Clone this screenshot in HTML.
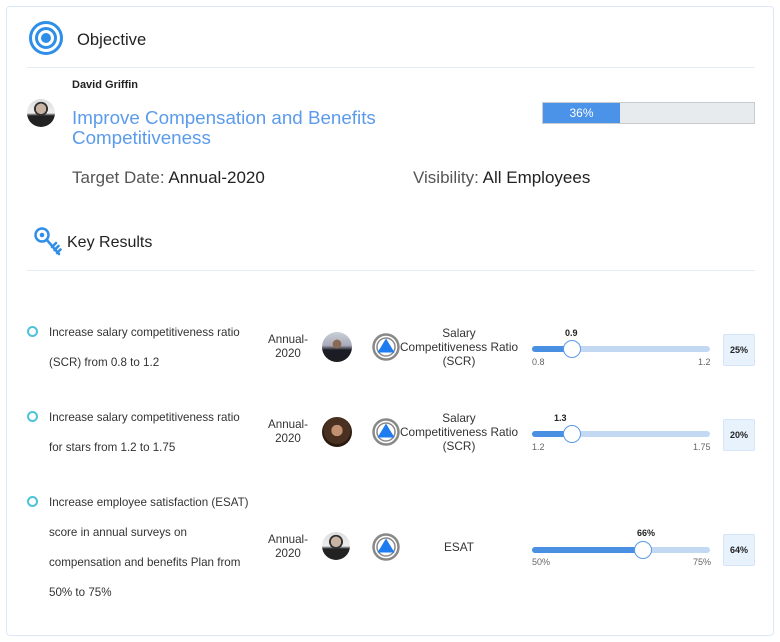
<!DOCTYPE html>
<html><head><meta charset="utf-8"><style>
*{margin:0;padding:0;box-sizing:border-box}
body{width:780px;height:642px;background:#fff;font-family:"Liberation Sans",sans-serif;color:#222;position:relative;overflow:hidden}
.a{position:absolute;white-space:nowrap}
.card{position:absolute;left:6px;top:6px;width:768px;height:630px;border:1px solid #dbe8f5;border-radius:4px}
.hr{position:absolute;left:27px;width:728px;height:1px;background:#e3edf7}
.krt{font-size:11.6px;color:#333;line-height:30px;left:49px}
.ann{font-size:11.6px;color:#333;text-align:center;width:50px;line-height:14px}
.met{font-size:11.8px;color:#333;text-align:center;width:130px;line-height:14px}
.track{position:absolute;left:532px;width:178px;height:6px;border-radius:3px;background:#c3d9f3}
.fill{position:absolute;left:0;top:0;height:6px;border-radius:3px;background:#4a90e2}
.thumb{position:absolute;width:18px;height:18px;border-radius:50%;background:#fff;border:1.5px solid #5b9be8}
.sm{font-size:9px;color:#666}
.val{font-size:9px;font-weight:bold;color:#222}
.box{position:absolute;left:723px;width:32px;height:32px;background:#e8f2fd;border:1px solid #d5e5f7;border-radius:2px;font-size:9px;font-weight:bold;text-align:center;line-height:30px}
.av{position:absolute;width:30px;height:30px;border-radius:50%}
.dot{position:absolute;left:27px;width:11px;height:11px;border:2px solid #4cc3d9;border-radius:50%}
</style></head><body>
<div class="card"></div>
<svg class="a" style="left:28px;top:20px" width="36" height="36"><circle cx="18" cy="18" r="15.5" fill="none" stroke="#2f8fe8" stroke-width="3"/><circle cx="18" cy="18" r="9.5" fill="none" stroke="#2f8fe8" stroke-width="3"/><circle cx="18" cy="18" r="5" fill="#2f8fe8"/></svg>
<div class="a" style="left:77px;top:30px;font-size:16.6px">Objective</div>
<div class="hr" style="top:67px"></div>
<div class="a" style="left:72px;top:79px;font-size:11px;font-weight:bold">David Griffin</div>
<div class="a" style="left:27px;top:99px;width:28px;height:28px;border-radius:50%;background:radial-gradient(circle at 50% 35%,#c9b3a3 0 22%,#333 23% 30%,transparent 31%),linear-gradient(#ddd,#eee 50%,#222 60%,#222);"></div>
<div class="a" style="left:72px;top:108px;font-size:18.8px;color:#5b9bec;line-height:20px;white-space:normal;width:360px">Improve Compensation and Benefits Competitiveness</div>
<div class="a" style="left:542px;top:102px;width:213px;height:22px;background:#e8ebee;border:1px solid #c8cbce"><div style="position:absolute;left:0;top:0;width:77px;height:20px;background:#4a93e8;color:#fff;font-size:12px;text-align:center;line-height:20px">36%</div></div>
<div class="a" style="left:72px;top:168px;font-size:17px;color:#555">Target Date: <span style="color:#222">Annual-2020</span></div>
<div class="a" style="left:413px;top:168px;font-size:17px;color:#555">Visibility: <span style="color:#222">All Employees</span></div>
<svg class="a" style="left:33px;top:226px" width="32" height="34"><circle cx="9" cy="9" r="6.5" fill="none" stroke="#2f8fe8" stroke-width="2.5"/><circle cx="9" cy="9" r="2.3" fill="#2f8fe8"/><path d="M13.5 13.5L26 28M19 21l4-4M21.5 24l4-4M24 27l3.5-3.5" stroke="#2f8fe8" stroke-width="2.5" stroke-linecap="round" fill="none"/></svg>
<div class="a" style="left:67px;top:234px;font-size:16px">Key Results</div>
<div class="hr" style="top:270px"></div>

<!-- row1 -->
<div class="dot" style="top:326px"></div>
<div class="a krt" style="top:318px">Increase salary competitiveness ratio<br>(SCR) from 0.8 to 1.2</div>
<div class="a ann" style="left:263px;top:333px">Annual-<br>2020</div>
<div class="av" style="left:322px;top:332px;background:radial-gradient(circle at 50% 40%,#8a6a55 0 18%,transparent 19%),linear-gradient(#c8d0d6,#aab 45%,#1c1c24 60%)"></div>
<svg class="a" style="left:372px;top:333px" width="28" height="28"><circle cx="14" cy="14" r="12.5" fill="#fff" stroke="#888" stroke-width="2.5"/><circle cx="14" cy="14" r="9" fill="#fff" stroke="#888" stroke-width="1.5"/><path d="M14 5.5L22.5 19.5H5.5Z" fill="#1f7cf0"/></svg>
<div class="a met" style="left:394px;top:326px">Salary<br>Competitiveness Ratio<br>(SCR)</div>
<div class="a val" style="left:565px;top:328px">0.9</div>
<div class="track" style="top:346px"><div class="fill" style="width:40px"></div></div>
<div class="thumb" style="left:563px;top:340px"></div>
<div class="a sm" style="left:532px;top:357px">0.8</div>
<div class="a sm" style="left:698px;top:357px">1.2</div>
<div class="box" style="top:334px">25%</div>

<!-- row2 -->
<div class="dot" style="top:411px"></div>
<div class="a krt" style="top:403px">Increase salary competitiveness ratio<br>for stars from 1.2 to 1.75</div>
<div class="a ann" style="left:263px;top:418px">Annual-<br>2020</div>
<div class="av" style="left:322px;top:417px;background:radial-gradient(circle at 50% 45%,#c09070 0 25%,#4a3020 26% 60%,#2a1a10 61%)"></div>
<svg class="a" style="left:372px;top:418px" width="28" height="28"><circle cx="14" cy="14" r="12.5" fill="#fff" stroke="#888" stroke-width="2.5"/><circle cx="14" cy="14" r="9" fill="#fff" stroke="#888" stroke-width="1.5"/><path d="M14 5.5L22.5 19.5H5.5Z" fill="#1f7cf0"/></svg>
<div class="a met" style="left:394px;top:411px">Salary<br>Competitiveness Ratio<br>(SCR)</div>
<div class="a val" style="left:554px;top:413px">1.3</div>
<div class="track" style="top:431px"><div class="fill" style="width:40px"></div></div>
<div class="thumb" style="left:563px;top:425px"></div>
<div class="a sm" style="left:532px;top:442px">1.2</div>
<div class="a sm" style="left:693px;top:442px">1.75</div>
<div class="box" style="top:419px">20%</div>

<!-- row3 -->
<div class="dot" style="top:496px"></div>
<div class="a krt" style="top:488px">Increase employee satisfaction (ESAT)<br>score in annual surveys on<br>compensation and benefits Plan from<br>50% to 75%</div>
<div class="a ann" style="left:263px;top:533px">Annual-<br>2020</div>
<div class="av" style="left:322px;top:532px;width:28px;height:28px;background:radial-gradient(circle at 50% 35%,#c9b3a3 0 22%,#333 23% 30%,transparent 31%),linear-gradient(#ddd,#eee 50%,#222 60%,#222)"></div>
<svg class="a" style="left:372px;top:533px" width="28" height="28"><circle cx="14" cy="14" r="12.5" fill="#fff" stroke="#888" stroke-width="2.5"/><circle cx="14" cy="14" r="9" fill="#fff" stroke="#888" stroke-width="1.5"/><path d="M14 5.5L22.5 19.5H5.5Z" fill="#1f7cf0"/></svg>
<div class="a met" style="left:394px;top:540px">ESAT</div>
<div class="a val" style="left:637px;top:528px">66%</div>
<div class="track" style="top:547px"><div class="fill" style="width:111px"></div></div>
<div class="thumb" style="left:634px;top:541px"></div>
<div class="a sm" style="left:532px;top:557px">50%</div>
<div class="a sm" style="left:693px;top:557px">75%</div>
<div class="box" style="top:534px">64%</div>
</body></html>
